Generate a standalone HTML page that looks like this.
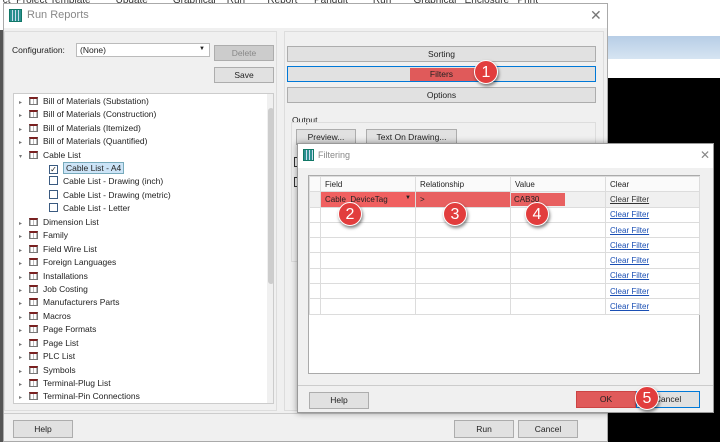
<!DOCTYPE html>
<html><head><style>
*{box-sizing:border-box;margin:0;padding:0}
body{width:720px;height:442px;position:relative;overflow:hidden;background:#000;font-family:"Liberation Sans",sans-serif;font-size:8.5px;color:#222}
.a{position:absolute}
.btn{position:absolute;background:#e1e1e1;border:1px solid #adadad;text-align:center;font-size:8.5px;color:#222}
.badge{position:absolute;width:24px;height:24px;border-radius:50%;background:#e23d3d;color:#fff;font-size:16px;text-align:center;line-height:24px;box-shadow:1px 2px 3px rgba(0,0,0,.5);border:1px solid #fff}
.ti{position:absolute;left:16px;height:12px;line-height:12px;white-space:nowrap}
.ic{display:inline-block;width:9px;height:8px;border:1px solid #777;border-top:2px solid #7a2020;background:repeating-linear-gradient(90deg,#bbb 0 1px,#fff 1px 3px);vertical-align:-1px;margin-right:5px}
.ar{display:inline-block;width:10px;color:#777;font-size:6px}
.cb{display:inline-block;width:9px;height:9px;border:1px solid #3a5a80;background:#fff;vertical-align:-1px;margin-right:5px;font-size:8px;line-height:7px;text-align:center}
table{border-collapse:collapse}
td{border:1px solid #dcdcdc;height:15.3px;padding:0 4px;font-size:8px;white-space:nowrap}
a{color:#1a4fb4;text-decoration:underline}
</style></head><body>
<div class="a" style="left:0;top:0;width:720px;height:36px;background:#fff"></div>
<div class="a" style="left:0;top:0;width:720px;height:6px;font-size:10px;color:#333;line-height:2px;white-space:nowrap">&nbsp;ct&nbsp;&nbsp;Project&nbsp;Template&nbsp;&nbsp;&nbsp;&nbsp;&nbsp;&nbsp;&nbsp;&nbsp;&nbsp;Update&nbsp;&nbsp;&nbsp;&nbsp;&nbsp;&nbsp;&nbsp;&nbsp;&nbsp;Graphical&nbsp;&nbsp;&nbsp;&nbsp;Run&nbsp;&nbsp;&nbsp;&nbsp;&nbsp;&nbsp;&nbsp;&nbsp;Report&nbsp;&nbsp;&nbsp;&nbsp;&nbsp;&nbsp;Panduit&nbsp;&nbsp;&nbsp;&nbsp;&nbsp;&nbsp;&nbsp;&nbsp;&nbsp;Run&nbsp;&nbsp;&nbsp;&nbsp;&nbsp;&nbsp;&nbsp;&nbsp;Graphical&nbsp;&nbsp;&nbsp;Enclosure&nbsp;&nbsp;&nbsp;Print</div>
<div class="a" style="left:608px;top:36px;width:112px;height:23px;background:linear-gradient(#b7cde6,#d6e4f2)"></div>
<div class="a" style="left:608px;top:59px;width:112px;height:19px;background:#fff"></div>
<div class="a" style="left:0;top:30px;width:3px;height:412px;background:#555"></div>

<div class="a" style="left:3px;top:3px;width:605px;height:439px;background:#f0f0f0;border:1px solid #aaa">
 <div class="a" style="left:0;top:0;width:603px;height:24px;background:#fff"></div>
 <div class="a" style="left:5px;top:5px;width:13px;height:13px;background:#2a8f8f;border:1px solid #176;background-image:repeating-linear-gradient(90deg,#2a8f8f 0 2px,#cde 2px 3px)"></div>
 <div class="a" style="left:23px;top:5px;font-size:11px;color:#888">Run Reports</div>
 <div class="a" style="left:586px;top:3px;font-size:14px;color:#777">✕</div>
 <div class="a" style="left:0;top:27px;width:273px;height:380px;border:1px solid #ddd"></div>
 <div class="a" style="left:280px;top:27px;width:320px;height:380px;border:1px solid #ddd"></div>
 <div class="a" style="left:8px;top:41px">Configuration:</div>
 <div class="a" style="left:72px;top:39px;width:134px;height:14px;background:#fff;border:1px solid #bbb;padding:1px 3px">(None)<span style="position:absolute;right:4px;font-size:6px;top:2px">▼</span></div>
 <div class="btn" style="left:210px;top:41px;width:60px;height:16px;line-height:14px;color:#888;background:#ccc">Delete</div>
 <div class="btn" style="left:210px;top:63px;width:60px;height:16px;line-height:14px">Save</div>
 <div class="a" style="left:9px;top:89px;width:261px;height:311px;background:#fff;border:1px solid #ccc;overflow:hidden">
  <div class="a" style="left:253px;top:0;width:8px;height:311px;background:#f0f0f0"></div>
  <div class="a" style="left:254px;top:14px;width:6px;height:176px;background:#cdcdcd;border-radius:3px"></div>
  <div class="ti" style="left:5px;top:1px"><span class="ar">▸</span><span class="ic"></span>Bill of Materials (Substation)</div>
  <div class="ti" style="left:5px;top:14px"><span class="ar">▸</span><span class="ic"></span>Bill of Materials (Construction)</div>
  <div class="ti" style="left:5px;top:28px"><span class="ar">▸</span><span class="ic"></span>Bill of Materials (Itemized)</div>
  <div class="ti" style="left:5px;top:41px"><span class="ar">▸</span><span class="ic"></span>Bill of Materials (Quantified)</div>
  <div class="ti" style="left:5px;top:55px"><span class="ar">▾</span><span class="ic"></span>Cable List</div>
  <div class="ti" style="left:35px;top:68px"><span class="cb">✓</span><span style="background:#cce4f7;border:1px solid #7ab;padding:0 2px">Cable List - A4</span></div>
  <div class="ti" style="left:35px;top:81px"><span class="cb"></span>Cable List - Drawing (inch)</div>
  <div class="ti" style="left:35px;top:95px"><span class="cb"></span>Cable List - Drawing (metric)</div>
  <div class="ti" style="left:35px;top:108px"><span class="cb"></span>Cable List - Letter</div>
  <div class="ti" style="left:5px;top:122px"><span class="ar">▸</span><span class="ic"></span>Dimension List</div>
  <div class="ti" style="left:5px;top:135px"><span class="ar">▸</span><span class="ic"></span>Family</div>
  <div class="ti" style="left:5px;top:149px"><span class="ar">▸</span><span class="ic"></span>Field Wire List</div>
  <div class="ti" style="left:5px;top:162px"><span class="ar">▸</span><span class="ic"></span>Foreign Languages</div>
  <div class="ti" style="left:5px;top:176px"><span class="ar">▸</span><span class="ic"></span>Installations</div>
  <div class="ti" style="left:5px;top:189px"><span class="ar">▸</span><span class="ic"></span>Job Costing</div>
  <div class="ti" style="left:5px;top:202px"><span class="ar">▸</span><span class="ic"></span>Manufacturers Parts</div>
  <div class="ti" style="left:5px;top:216px"><span class="ar">▸</span><span class="ic"></span>Macros</div>
  <div class="ti" style="left:5px;top:229px"><span class="ar">▸</span><span class="ic"></span>Page Formats</div>
  <div class="ti" style="left:5px;top:243px"><span class="ar">▸</span><span class="ic"></span>Page List</div>
  <div class="ti" style="left:5px;top:256px"><span class="ar">▸</span><span class="ic"></span>PLC List</div>
  <div class="ti" style="left:5px;top:270px"><span class="ar">▸</span><span class="ic"></span>Symbols</div>
  <div class="ti" style="left:5px;top:283px"><span class="ar">▸</span><span class="ic"></span>Terminal-Plug List</div>
  <div class="ti" style="left:5px;top:296px"><span class="ar">▸</span><span class="ic"></span>Terminal-Pin Connections</div>
 </div>
 <div class="a" style="left:0;top:409px;width:603px;height:1px;background:#ccc"></div>
 <div class="btn" style="left:9px;top:416px;width:60px;height:18px;line-height:16px">Help</div>
 <div class="btn" style="left:450px;top:416px;width:60px;height:18px;line-height:16px">Run</div>
 <div class="btn" style="left:514px;top:416px;width:60px;height:18px;line-height:16px">Cancel</div>
 <div class="btn" style="left:283px;top:42px;width:309px;height:16px;line-height:14px">Sorting</div>
 <div class="btn" style="left:283px;top:62px;width:309px;height:16px;line-height:14px;border-color:#0078d7"><span style="position:absolute;left:122px;top:1px;width:68px;height:13px;background:#e05a5a"></span><span style="position:relative">Filters</span></div>
 <div class="btn" style="left:283px;top:83px;width:309px;height:16px;line-height:14px">Options</div>
 <div class="a" style="left:288px;top:111px">Output</div>
 <div class="a" style="left:287px;top:118px;width:305px;height:140px;border:1px solid #ddd"></div>
 <div class="btn" style="left:292px;top:125px;width:60px;height:16px;line-height:14px">Preview...</div>
 <div class="btn" style="left:362px;top:125px;width:91px;height:16px;line-height:14px">Text On Drawing...</div>
 <div class="a" style="left:290px;top:153px;width:6px;height:10px;border:1px solid #333"></div>
 <div class="a" style="left:290px;top:173px;width:6px;height:10px;border:1px solid #333"></div>
</div>

<div class="a" style="left:297px;top:143px;width:417px;height:270px;background:#f0f0f0;border:1px solid #999;box-shadow:0 0 6px rgba(0,0,0,.4)">
 <div class="a" style="left:0;top:0;width:415px;height:24px;background:#fff"></div>
 <div class="a" style="left:5px;top:5px;width:11px;height:12px;border:1px solid #176;background-image:repeating-linear-gradient(90deg,#2a8f8f 0 2px,#cde 2px 3px)"></div>
 <div class="a" style="left:20px;top:6px;font-size:9px;color:#888">Filtering</div>
 <div class="a" style="left:402px;top:4px;font-size:12px;color:#888">✕</div>
 <div class="a" style="left:10px;top:31px;width:392px;height:199px;background:#fff;border:1px solid #aaa">
  <table style="width:391px">
   <tr style="background:#fafafa"><td style="width:11px"></td><td style="width:95px">Field</td><td style="width:95px">Relationship</td><td style="width:95px">Value</td><td>Clear</td></tr>
   <tr style="background:#f0f0f0"><td></td><td style="background:#f06060;position:relative">Cable_DeviceTag<span style="position:absolute;right:4px;font-size:6px">▼</span></td><td style="background:#e86060">&gt;</td><td style="padding:0;"><div style="background:#e86060;width:54px;height:13px;padding:0 3px;line-height:13px">CAB30</div></td><td><a style="color:#333">Clear Filter</a></td></tr>
   <tr><td></td><td></td><td></td><td></td><td><a>Clear Filter</a></td></tr>
   <tr><td></td><td></td><td></td><td></td><td><a>Clear Filter</a></td></tr>
   <tr><td></td><td></td><td></td><td></td><td><a>Clear Filter</a></td></tr>
   <tr><td></td><td></td><td></td><td></td><td><a>Clear Filter</a></td></tr>
   <tr><td></td><td></td><td></td><td></td><td><a>Clear Filter</a></td></tr>
   <tr><td></td><td></td><td></td><td></td><td><a>Clear Filter</a></td></tr>
   <tr><td></td><td></td><td></td><td></td><td><a>Clear Filter</a></td></tr>
  </table>
 </div>
 <div class="a" style="left:0;top:241px;width:415px;height:1px;background:#ccc"></div>
 <div class="btn" style="left:11px;top:248px;width:60px;height:17px;line-height:15px">Help</div>
 <div class="btn" style="left:278px;top:247px;width:60px;height:17px;line-height:15px;background:#e05a5a;border-color:#c44">OK</div>
 <div class="btn" style="left:338px;top:247px;width:64px;height:17px;line-height:15px;border-color:#0078d7">Cancel</div>
</div>

<div class="badge" style="left:474px;top:60px">1</div>
<div class="badge" style="left:338px;top:202px">2</div>
<div class="badge" style="left:443px;top:202px">3</div>
<div class="badge" style="left:525px;top:202px">4</div>
<div class="badge" style="left:635px;top:386px">5</div>
</body></html>
